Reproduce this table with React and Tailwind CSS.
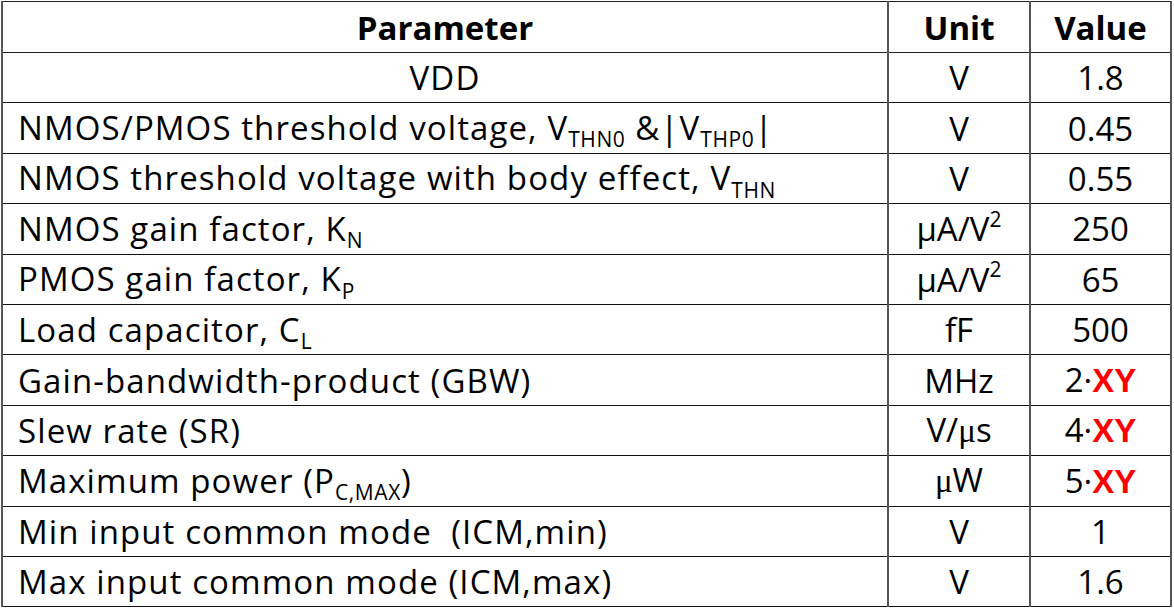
import React from "react";

const font = { fontFamily: "'Open Sans', Lato, sans-serif" };

const Sub = ({ children }) => (
  <sub className="text-[21px] align-[-2px] leading-none tracking-[0.6px]">{children}</sub>
);

const Sup2 = () => <sup className="text-[21px] align-[4px] leading-none">2</sup>;

const XY = () => (
  <span className="font-bold text-[#ff0000] font-['Liberation_Sans',Arial,sans-serif]">XY</span>
);

const Mu = () => <span className="font-['Liberation_Serif',serif]">μ</span>;

const rows = [
  { p: "VDD", center: true, u: "V", v: "1.8" },
  {
    p: (
      <>
        NMOS/PMOS threshold voltage, V<Sub>THN0</Sub> &amp;|V<Sub>THP0</Sub>|
      </>
    ),
    u: "V",
    v: "0.45",
  },
  {
    p: (
      <>
        NMOS threshold voltage with body effect, V<Sub>THN</Sub>
      </>
    ),
    u: "V",
    v: "0.55",
  },
  {
    p: (
      <>
        NMOS gain factor, K<Sub>N</Sub>
      </>
    ),
    u: (
      <>
        μA/V<Sup2 />
      </>
    ),
    v: "250",
  },
  {
    p: (
      <>
        PMOS gain factor, K<Sub>P</Sub>
      </>
    ),
    u: (
      <>
        μA/V<Sup2 />
      </>
    ),
    v: "65",
  },
  {
    p: (
      <>
        Load capacitor, C<Sub>L</Sub>
      </>
    ),
    u: "fF",
    v: "500",
  },
  { p: "Gain-bandwidth-product (GBW)", u: "MHz", v: <>2·<XY /></> },
  {
    p: "Slew rate (SR)",
    u: (
      <>
        V/<Mu />s
      </>
    ),
    v: <>4·<XY /></>,
  },
  {
    p: (
      <>
        Maximum power (P<Sub>C,MAX</Sub>)
      </>
    ),
    u: (
      <>
        <Mu />W
      </>
    ),
    v: <>5·<XY /></>,
  },
  { p: "Min input common mode  (ICM,min)", u: "V", v: "1" },
  { p: "Max input common mode (ICM,max)", u: "V", v: "1.6" },
];

export default function App() {
  return (
    <div className="w-[1174px] h-[610px] bg-white pt-[1px] pl-[1px]" style={font}>
      <table className="border-collapse text-[33px] leading-none text-black">
        <thead>
          <tr className="h-[51px] border-y border-[#222]">
            <th className="w-[886px] border-x-2 border-[#555] font-bold">Parameter</th>
            <th className="w-[142px] border-x-2 border-[#555] font-bold">Unit</th>
            <th className="w-[141px] border-x-2 border-[#555] font-bold">Value</th>
          </tr>
        </thead>
        <tbody>
          {rows.map((r, i) => (
            <tr key={i} className="h-[50.4px] border-y border-[#111]">
              <td
                className={`border-x-2 border-[#555] whitespace-pre tracking-[1.1px] ${
                  r.center ? "text-center" : "text-left pl-[15px]"
                }`}
              >
                {r.p}
              </td>
              <td className="border-x-2 border-[#555] text-center">{r.u}</td>
              <td className="border-x-2 border-[#555] text-center">{r.v}</td>
            </tr>
          ))}
        </tbody>
      </table>
    </div>
  );
}
